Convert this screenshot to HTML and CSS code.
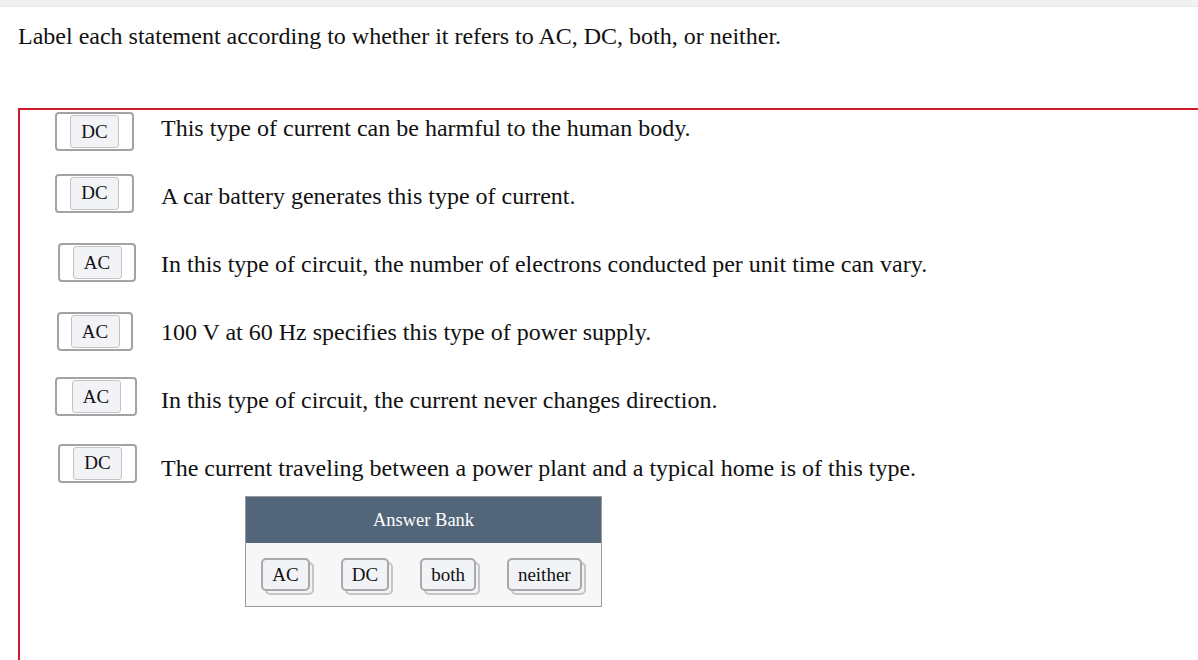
FILE: index.html
```html
<!DOCTYPE html>
<html>
<head>
<meta charset="utf-8">
<link rel="stylesheet" href="styles.css">
</head>
<body>
<div class="topbar"></div>
<p class="prompt">Label each statement according to whether it refers to AC, DC, both, or neither.</p>
<div class="panel">
  <div class="rows">
    <div class="row">
      <div class="slot"><div class="dz j1"><span class="chip">DC</span></div></div>
      <div class="stmt">This type of current can be harmful to the human body.</div>
    </div>
    <div class="row">
      <div class="slot"><div class="dz j2"><span class="chip">DC</span></div></div>
      <div class="stmt">A car battery generates this type of current.</div>
    </div>
    <div class="row">
      <div class="slot"><div class="dz j3"><span class="chip">AC</span></div></div>
      <div class="stmt">In this type of circuit, the number of electrons conducted per unit time can vary.</div>
    </div>
    <div class="row">
      <div class="slot"><div class="dz j4"><span class="chip">AC</span></div></div>
      <div class="stmt">100 V at 60 Hz specifies this type of power supply.</div>
    </div>
    <div class="row">
      <div class="slot"><div class="dz j5"><span class="chip">AC</span></div></div>
      <div class="stmt">In this type of circuit, the current never changes direction.</div>
    </div>
    <div class="row">
      <div class="slot"><div class="dz j6"><span class="chip">DC</span></div></div>
      <div class="stmt">The current traveling between a power plant and a typical home is of this type.</div>
    </div>
  </div>
  <div class="bank">
    <div class="bank-head">Answer Bank</div>
    <div class="bank-body">
      <span class="token">AC</span>
      <span class="token">DC</span>
      <span class="token">both</span>
      <span class="token">neither</span>
    </div>
  </div>
</div>
</body>
</html>
```
FILE: styles.css
```css
html, body {
  margin: 0;
  padding: 0;
  background: #ffffff;
  overflow: hidden;
}
body {
  font-family: "Liberation Serif", "Times New Roman", serif;
  color: #111;
}
.topbar {
  height: 6px;
  background: #f1f1f1;
  border-bottom: 1px solid #e6e6e6;
}
.prompt {
  margin: 0;
  padding: 15px 0 0 18px;
  font-size: 24px;
  line-height: 28px;
  height: 28px;
}
.panel {
  margin: 58px 0 0 18px;
  border-top: 2px solid #cf1a2d;
  border-left: 2px solid #cf1a2d;
  min-height: 600px;
}
.rows {
  display: flex;
  flex-direction: column;
  gap: 44px;
  padding-top: 6px;
}
.row {
  display: flex;
  align-items: center;
  height: 24px;
}
.slot {
  width: 141px;
  flex: none;
  display: flex;
  align-items: center;
  height: 24px;
}
.dz {
  box-sizing: border-box;
  height: 39px;
  width: 79px;
  flex: none;
  border: 2px solid #a3a3a3;
  border-radius: 4px;
  display: flex;
  align-items: center;
  justify-content: center;
  background: #fff;
}
.j1 { margin-left: 35px; width: 79px; margin-top: 7px; }
.j2 { margin-left: 35px; width: 79px; margin-top: -6px; }
.j3 { margin-left: 38px; width: 78px; margin-top: -3px; }
.j4 { margin-left: 37px; width: 76px; margin-top: -1px; }
.j5 { margin-left: 35px; width: 82px; margin-top: -7px; }
.j6 { margin-left: 38px; width: 79px; margin-top: -10px; }
.chip {
  box-sizing: border-box;
  height: 33px;
  width: 49px;
  border: 1px solid #c4c4c4;
  border-radius: 3px;
  background: #f2f3f7;
  font-size: 19px;
  display: flex;
  align-items: center;
  justify-content: center;
}
.stmt {
  font-size: 24px;
  line-height: 24px;
  white-space: nowrap;
}
.bank {
  margin: 16px 0 0 225px;
  width: 357px;
  box-sizing: border-box;
  border: 1px solid #9c9c9c;
}
.bank-head {
  background: #526579;
  color: #fff;
  height: 46px;
  display: flex;
  align-items: center;
  justify-content: center;
  font-size: 18.5px;
}
.bank-body {
  background: #f7f7f7;
  height: 63px;
  display: flex;
  align-items: center;
  justify-content: center;
  gap: 31px;
  box-sizing: border-box;
  padding-right: 4px;
}
.token {
  box-sizing: border-box;
  height: 33px;
  padding: 0 9px;
  border: 2px solid #a9a9a9;
  border-radius: 5px;
  background: #f2f3f7;
  font-size: 19px;
  display: flex;
  align-items: center;
  box-shadow: 4px 4px 0 -2px #f2f3f7, 4px 4px 0 0 #c6c6c6;
}
```
